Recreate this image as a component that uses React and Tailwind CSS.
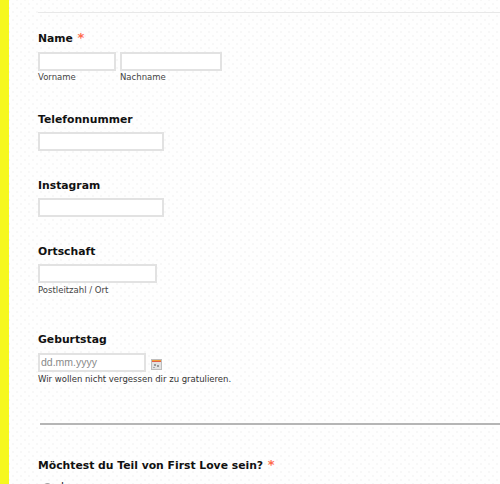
function Label({ children, req }) {
  return (
    <div className="text-[10.8px] leading-[16px] font-bold text-[#111111]">
      {children}
      {req && <span className="text-[13px] leading-[13px] text-[#ff6a4d]">{" "}*</span>}
    </div>
  );
}
function Input({ className = "" }) {
  return <div className={"h-[19px] bg-white border-2 border-[#e2e2e2] " + className} />;
}
function Sub({ children, className = "" }) {
  return <div className={"text-[8.5px] leading-[12px] text-[#444444] " + className}>{children}</div>;
}
export default function App() {
  return (
    <div className="w-[500px] h-[484px] overflow-hidden flex font-['DejaVu_Sans',sans-serif] bg-[#fefefe]">
      <div className="w-[9px] shrink-0 bg-[#f6f81f]" />
      <div className="flex-1 flex flex-col [&>*]:shrink-0 pl-[29px] bg-[radial-gradient(#efefef_0.6px,transparent_0.8px),radial-gradient(#efefef_0.6px,transparent_0.8px)] bg-[length:8px_8px] bg-[position:0_0,4px_4px]">
        <div className="h-px mt-[12px] bg-[#e8e8e8]" />
        <div className="mt-[18px]"><Label req>Name</Label></div>
        <div className="flex gap-1 mt-[5px]">
          <div><Input className="w-[78px]" /><Sub>Vorname</Sub></div>
          <div><Input className="w-[102px]" /><Sub>Nachname</Sub></div>
        </div>
        <div className="mt-[29px]"><Label>Telefonnummer</Label></div>
        <Input className="w-[126px] mt-[4px]" />
        <div className="mt-[27px]"><Label>Instagram</Label></div>
        <Input className="w-[126px] mt-[4px]" />
        <div className="mt-[27px]"><Label>Ortschaft</Label></div>
        <Input className="w-[119px] mt-[4px]" />
        <Sub className="mt-[1px]">Postleitzahl / Ort</Sub>
        <div className="mt-[36px]"><Label>Geburtstag</Label></div>
        <div className="flex items-center gap-[5px] mt-[5px]">
          <div className="w-[108px] h-[19px] bg-white border-2 border-[#e2e2e2] flex items-center pl-[1px] text-[10.5px] text-[#8a8a8a] font-['Liberation_Sans',sans-serif]">dd.mm.yyyy</div>
          <svg className="mt-[3px]" width="11" height="11" viewBox="0 0 11 11">
            <rect width="11" height="11" fill="#bdbdbd" />
            <rect x="1" y="1" width="9" height="1" fill="#eea03a" />
            <rect x="1" y="2" width="9" height="1" fill="#e0604a" />
            <rect x="1" y="3" width="9" height="7" fill="#e2e2e2" />
            <rect x="3" y="5" width="2" height="2" fill="#999999" />
            <rect x="6" y="6" width="2" height="2" fill="#999999" />
            <rect x="2" y="8" width="2" height="1" fill="#aaaaaa" />
          </svg>
        </div>
        <div className="text-[8.5px] leading-[12px] text-[#333333] mt-[1px]">Wir wollen nicht vergessen dir zu gratulieren.</div>
        <div className="h-[2px] bg-[#b5b5b5] ml-[2px] mt-[38px]" />
        <div className="mt-[33px]"><Label req>Möchtest du Teil von First Love sein?</Label></div>
        <div className="flex items-center gap-[9px] mt-[7px] ml-[5px]">
          <div className="w-[9px] h-[9px] rounded-full border border-[#8a8a8a] bg-white shrink-0" />
          <span className="text-[10px] leading-[12px] text-[#222222]">Ja</span>
        </div>
      </div>
    </div>
  );
}
